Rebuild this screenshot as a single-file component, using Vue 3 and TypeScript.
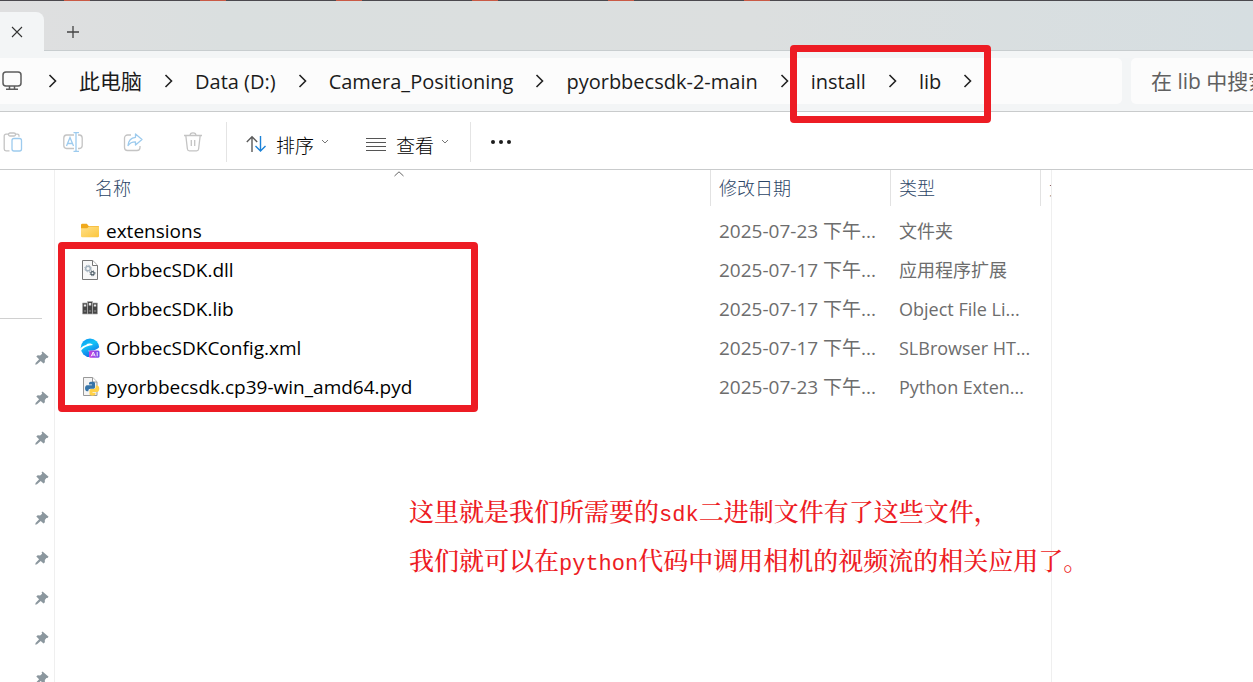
<script setup lang="ts">
interface FileRow {
  icon: string
  name: string
  date: string
  type: string
}

const crumbs: string[] = ['Data (D:)', 'Camera_Positioning', 'pyorbbecsdk-2-main', 'install', 'lib']

const files: FileRow[] = [
  { icon: 'folder', name: 'extensions', date: '2025-07-23 下午...', type: '文件夹' },
  { icon: 'dll', name: 'OrbbecSDK.dll', date: '2025-07-17 下午...', type: '应用程序扩展' },
  { icon: 'lib', name: 'OrbbecSDK.lib', date: '2025-07-17 下午...', type: 'Object File Li...' },
  { icon: 'xml', name: 'OrbbecSDKConfig.xml', date: '2025-07-17 下午...', type: 'SLBrowser HT...' },
  { icon: 'pyd', name: 'pyorbbecsdk.cp39-win_amd64.pyd', date: '2025-07-23 下午...', type: 'Python Exten...' },
]
</script>

<template>
  <div class="window">
    <div class="backdrop"></div>
    <header class="tabs">
      <div class="tab">
        <button class="icon-btn" aria-label="关闭标签页">
          <svg width="12" height="12" viewBox="0 0 12 12"><path d="M1 1l10 10M11 1L1 11" stroke="#333" stroke-width="1.1" fill="none" /></svg>
        </button>
      </div>
      <button class="icon-btn new-tab" aria-label="新建标签页">
        <svg width="14" height="14" viewBox="0 0 14 14"><path d="M7 1v12M1 7h12" stroke="#444" stroke-width="1.3" fill="none" /></svg>
      </button>
    </header>

    <div class="address-row">
      <nav class="address" aria-label="地址">
        <svg class="pc" width="20" height="20" viewBox="0 0 20 20" fill="none" stroke="#5c5c5c" stroke-width="1.5">
          <rect x="1" y="1" width="18" height="14" rx="3" />
          <path d="M7.5 15v3M12.5 15v3M4 18.2h12" />
        </svg>
        <svg class="chev" width="53" height="16" viewBox="0 0 53 16"><path d="M23.500 2l6 6-6 6" /></svg>
        <a class="crumb root" href="#">此电脑</a>
        <svg class="chev" width="53" height="16" viewBox="0 0 53 16"><path d="M23.500 2l6 6-6 6" /></svg>
        <template v-for="c in crumbs" :key="c">
          <a class="crumb" href="#">{{ c }}</a>
          <svg class="chev" width="53" height="16" viewBox="0 0 53 16"><path d="M23.500 2l6 6-6 6" /></svg>
        </template>
      </nav>
      <input class="search" type="text" placeholder="在 lib 中搜索" aria-label="在 lib 中搜索" />
    </div>

    <div class="toolbar">
      <div class="tools">
        <button class="tool" aria-label="粘贴">
          <svg width="20" height="20" viewBox="0 0 20 20" fill="none" stroke="#c4c4c4" stroke-width="1.3">
            <path d="M6 2.2H3a1.8 1.8 0 0 0-1.8 1.8v13A1.8 1.8 0 0 0 3 18.8h3.5M12 2.2h2.4A1.6 1.6 0 0 1 16 3.8v1" />
            <rect x="5.5" y="1" width="7" height="3" rx="1.5" />
            <rect x="9" y="6.5" width="9.5" height="12.5" rx="2" stroke="#9dcbee" />
          </svg>
        </button>
        <button class="tool" aria-label="重命名">
          <svg width="20" height="20" viewBox="0 0 20 20" fill="none" stroke="#c4c4c4" stroke-width="1.3">
            <path d="M11 3H3.5A3 3 0 0 0 .8 6v7.5a3 3 0 0 0 2.700 3H11M15 3h1.500a3 3 0 0 1 2.700 3v7.500a3 3 0 0 1-2.700 3H15" />
            <path d="M3.500 14L7 5.500l3.500 8.500M4.700 11.500h4.600M13 .7v18.600M10.500.7h5.500M10.500 19.300h5.500" stroke="#9dcbee" />
          </svg>
        </button>
        <button class="tool" aria-label="共享">
          <svg width="20" height="20" viewBox="0 0 20 20" fill="none" stroke="#c4c4c4" stroke-width="1.3" stroke-linejoin="round">
            <path d="M8 3H4.500A3 3 0 0 0 1.500 6v9.500a3 3 0 0 0 3 3h9.500a3 3 0 0 0 3-3V14" />
            <path d="M12.500 2L19 7.500l-6.500 5.500V9.800C9 9.700 6.800 11 5 13.500 5.400 9 8 5.800 12.500 5.300z" stroke="#9dcbee" />
          </svg>
        </button>
        <button class="tool" aria-label="删除">
          <svg width="20" height="20" viewBox="0 0 20 20" fill="none" stroke="#c4c4c4" stroke-width="1.3">
            <path d="M1 3.500h18M7 3.500a3 2.700 0 0 1 6 0M2.800 3.500l1.600 13.500a2 2 0 0 0 2 1.800h7.200a2 2 0 0 0 2-1.800L17.200 3.500M8.300 8v6M11.700 8v6" />
          </svg>
        </button>
      </div>
      <div class="menus">
        <button class="menu">
          <svg class="glyph" width="20" height="18" viewBox="0 0 20 18" fill="none" stroke-width="1.400">
            <path d="M6 17V2M.8 7L6 1.800 11.200 7" stroke="#5a5a5a" />
            <path d="M14.500 1v15M9.500 11l5 5 5-5" stroke="#1b82d8" />
          </svg>
          <span>排序</span>
          <svg width="8" height="6" viewBox="0 0 8 6"><path d="M1 1l3 3 3-3" stroke="#777" fill="none" /></svg>
        </button>
        <button class="menu">
          <svg class="glyph" width="20" height="14" viewBox="0 0 20 14"><path d="M0 1.500h20M0 5.500h20M0 9.500h20M0 13.500h20" stroke="#555" stroke-width="1" /></svg>
          <span>查看</span>
          <svg width="8" height="6" viewBox="0 0 8 6"><path d="M1 1l3 3 3-3" stroke="#777" fill="none" /></svg>
        </button>
      </div>
      <button class="more" aria-label="更多">
        <svg width="22" height="6" viewBox="0 0 22 6" fill="#1c1c1c"><circle cx="3" cy="3" r="2" /><circle cx="11" cy="3" r="2" /><circle cx="19" cy="3" r="2" /></svg>
      </button>
    </div>

    <main class="content">
      <aside class="side">
        <hr class="rule" />
        <div v-for="n in 9" :key="n" class="pin">
          <svg width="14" height="14" viewBox="0 0 14 14" fill="#8b979e"><path d="M7.500.4L13.600 5.800 12.400 7l-1-.1-1.600 2 .1 2.300-1.400 1.400L5.700 9.900 2 13.300.3 13.700.6 12 4.100 8.300 1.300 5.500 2.700 4.200l2.400.2L7.200 2.700 6.600 1.400z" /></svg>
        </div>
      </aside>

      <section class="list">
        <svg class="sorted" width="10" height="6" viewBox="0 0 10 6"><path d="M.5 5L5 .8 9.500 5" stroke="#666" fill="none" /></svg>
        <table>
          <colgroup>
            <col class="c-name" /><col class="c-date" /><col class="c-type" /><col class="c-size" />
          </colgroup>
          <thead>
            <tr><th class="name">名称</th><th>修改日期</th><th>类型</th><th>大小</th></tr>
          </thead>
          <tbody>
            <tr v-for="f in files" :key="f.name">
              <td class="name">
                <div class="file">
                  <svg v-if="f.icon === 'folder'" width="20" height="20" viewBox="0 0 20 20">
                    <defs><linearGradient id="fold" x1="0" y1="0" x2="1" y2="1"><stop offset="0" stop-color="#ffe08a" /><stop offset="1" stop-color="#fcc63c" /></linearGradient></defs>
                    <path d="M1 4a1.200 1.200 0 0 1 1.200-1.200h4.600L8.700 5H18a1 1 0 0 1 1 1v4H1z" fill="#f0a91c" />
                    <path d="M1 7.200h6.200L9 5.500h9a1 1 0 0 1 1 1V15a1.200 1.200 0 0 1-1.200 1.200H2.200A1.200 1.200 0 0 1 1 15z" fill="url(#fold)" />
                  </svg>
                  <svg v-else-if="f.icon === 'dll'" width="20" height="20" viewBox="0 0 20 20">
                    <path d="M2.500.5h10.200l4.800 4.800v14.200h-15z" fill="#f8f8f8" stroke="#777" />
                    <path d="M12.500.5v5h5" fill="#fff" stroke="#777" />
                    <circle cx="8" cy="8.500" r="2.300" fill="none" stroke="#a3b1bd" stroke-width="1.400" />
                    <circle cx="8" cy="8.500" r="3.300" fill="none" stroke="#a3b1bd" stroke-dasharray="1.300 1.300" />
                    <circle cx="12.500" cy="13.300" r="1.600" fill="none" stroke="#4e5d68" stroke-width="1.200" />
                    <circle cx="12.500" cy="13.300" r="2.500" fill="none" stroke="#4e5d68" stroke-dasharray="1 1" />
                  </svg>
                  <svg v-else-if="f.icon === 'lib'" width="20" height="20" viewBox="0 0 20 20">
                    <path d="M2.500 4h5v11h-5zM7.500 2.500h5v12.500h-5zM12.500 4h5v11h-5z" fill="#454545" stroke="#aaa" stroke-width=".7" />
                    <path d="M3.800 5.500h2.400v2H3.800zM8.800 4h2.400v2.500H8.800zM13.800 5.500h2.400v2h-2.400z" fill="#e5e5e5" />
                    <path d="M3.800 12h2.400M8.800 12h2.400M13.800 12h2.400" stroke="#999" />
                  </svg>
                  <svg v-else-if="f.icon === 'xml'" width="20" height="20" viewBox="0 0 20 20">
                    <defs>
                      <linearGradient id="wave" x1="0" y1="0" x2=".5" y2="1"><stop offset="0" stop-color="#0a8df5" /><stop offset=".45" stop-color="#14c5f5" /><stop offset="1" stop-color="#126ce8" /></linearGradient>
                      <linearGradient id="badge" x1="0" y1="0" x2="1" y2="0"><stop offset="0" stop-color="#d03fd8" /><stop offset="1" stop-color="#6b4df0" /></linearGradient>
                    </defs>
                    <circle cx="10" cy="9.800" r="9.300" fill="url(#wave)" />
                    <path d="M0 10.800C2 8.300 4 7.300 6 6.900c2-1.700 4.800-1.800 7 .2C9 7.300 4 9 .8 13z" fill="#fff" />
                    <path d="M8.300 12.600c4 .8 8-.2 11.700-4V14H9.500c-.8-.4-1.200-.8-1.200-1.400z" fill="#fff" />
                    <rect x="9" y="12.500" width="10.500" height="7.300" rx="1.500" fill="url(#badge)" />
                    <path d="M11.200 18.300l2-4.300 2 4.300M12 17h2.400M17.200 14v4.300" fill="none" stroke="#fff" stroke-width=".9" />
                  </svg>
                  <svg v-else width="20" height="20" viewBox="0 0 20 20">
                    <path d="M3.500.5h9.200l4.300 4.300v13.700H3.500z" fill="#f4f4f4" stroke="#999" />
                    <path d="M12.500.5v4.500H17" fill="#fff" stroke="#999" />
                    <path d="M9 6.200c0-1.800 6-1.800 6 0v3.800c0 1.500-1 1.700-2 1.700h-2.500c-1.500 0-2.200.8-2.200 2.500H7c-2.600 0-2.600-6 0-6h5V7.500H9z" fill="#3674a8" />
                    <path d="M15.700 8.500H17c3 0 3 6.500 0 6.500h-4.500v.8h3v1.200c0 2.300-6 2.300-6 0v-3c0-1.500 1-2 2-2h2.500c1 0 1.700-.8 1.700-2z" fill="#ffd148" />
                  </svg>
                  <span>{{ f.name }}</span>
                </div>
              </td>
              <td class="date">{{ f.date }}</td>
              <td>{{ f.type }}</td>
              <td></td>
            </tr>
          </tbody>
        </table>
      </section>
      <section class="preview"></section>
    </main>

    <div class="mark mark-path"></div>
    <div class="mark mark-files"></div>
    <div class="note">
      <p>这里就是我们所需要的<span class="latin">sdk</span>二进制文件有了这些文件，</p>
      <p>我们就可以在<span class="latin">python</span>代码中调用相机的视频流的相关应用了。</p>
    </div>
  </div>
</template>

<style>
body {
  margin: 0;
}
</style>

<style scoped>
.window {
  position: relative;
  display: flex;
  flex-direction: column;
  height: 100vh;
  overflow: hidden;
  background: #fff;
  color: #1b1b1b;
  font-family: "Open Sans", "Noto Sans CJK SC", sans-serif;
  font-size: 18px;
}
button {
  border: 0;
  padding: 0;
  background: none;
  color: inherit;
  font: inherit;
}
svg {
  display: block;
  flex: none;
}
.backdrop {
  height: 1px;
  flex: none;
  background: linear-gradient(90deg, transparent 775px, #4b494e 775px), repeating-linear-gradient(90deg, #4b494e 0 64px, #c95a45 64px 90px, #4b494e 90px 136px);
}
.tabs {
  display: flex;
  flex: none;
  height: 49px;
  border-bottom: 1px solid #c8cdcf;
  background: linear-gradient(90deg, #dfdfe0, #dadfdf 18%, #dcdfdf 60%, #d6dee1);
}
.tab {
  display: flex;
  align-items: center;
  width: 44px;
  height: 39px;
  margin-top: 11px;
  border-radius: 0 8px 0 0;
  background: #f3f5f6;
}
.icon-btn {
  display: flex;
  align-items: center;
  justify-content: center;
  width: 34px;
  height: 38px;
}
.new-tab {
  width: 58px;
  margin-top: 12px;
}
.address-row {
  display: flex;
  flex: none;
  gap: 9px;
  padding: 7px 0;
  border-bottom: 1px solid #c9cbcc;
  background: #f3f5f6;
}
.address {
  display: flex;
  flex: 1;
  align-items: center;
  min-width: 0;
  height: 46px;
  padding-left: 2px;
  border-radius: 0 5px 5px 0;
  background: #fcfcfc;
  font-size: 20px;
}
.pc {
  margin-right: 4px;
}
.chev path {
  fill: none;
  stroke: #222;
  stroke-width: 1.6;
}
.crumb {
  padding-top: 2px;
  color: inherit;
  line-height: 28px;
  text-decoration: none;
  white-space: nowrap;
}
.root {
  padding-top: 0;
  font-size: 21px;
}
.search {
  box-sizing: border-box;
  flex: none;
  width: 122px;
  height: 46px;
  padding: 0 0 0 20px;
  border: 0;
  border-radius: 5px 0 0 5px;
  background: #fcfcfc;
  font: inherit;
  font-size: 21px;
}
.search::placeholder {
  color: #606060;
  opacity: 1;
}
.toolbar {
  box-sizing: border-box;
  display: flex;
  flex: none;
  align-items: center;
  height: 58px;
  padding-top: 3px;
  border-bottom: 1px solid #c9cbcc;
}
.tools {
  display: flex;
  gap: 40px;
  padding: 0 23px 0 3px;
}
.menus {
  display: flex;
  gap: 37px;
  padding: 0 21px 0 19px;
  border-left: 1px solid #e4e4e4;
  border-right: 1px solid #e4e4e4;
}
.menu {
  display: flex;
  align-items: center;
  height: 40px;
  color: #000;
  font-size: 19px;
  font-weight: 300;
}
.menu span {
  margin: 6px 7px 0 10px;
}
.glyph {
  margin-top: 4px;
}
.more {
  padding: 0 19px;
}
.content {
  display: flex;
  flex: 1;
  min-height: 0;
}
.side {
  flex: none;
  width: 54px;
  border-right: 1px solid #efefef;
  overflow: hidden;
}
.rule {
  width: 42px;
  height: 1px;
  margin: 148px 0 19px;
  border: 0;
  background: #d0d0d0;
}
.pin {
  display: flex;
  align-items: center;
  justify-content: flex-end;
  height: 40px;
  padding-right: 5px;
}
.list {
  position: relative;
  flex: 1;
  min-width: 0;
  overflow: hidden;
  border-right: 1px solid #efefef;
}
.preview {
  flex: none;
  width: 201px;
}
.sorted {
  position: absolute;
  top: 1px;
  left: 339px;
}
table {
  width: 100%;
  table-layout: fixed;
  border-collapse: separate;
  border-spacing: 0;
}
.c-date {
  width: 180px;
}
.c-type {
  width: 150px;
}
.c-size {
  width: 11px;
}
th,
td {
  box-sizing: border-box;
  overflow: hidden;
  padding: 0 0 0 8px;
  line-height: 24px;
  text-align: left;
  white-space: nowrap;
}
th {
  height: 36px;
  border-left: 1px solid #e2e2e2;
  color: #2c4566;
  font-weight: 300;
}
td {
  height: 39px;
  padding-left: 9px;
  color: #6d6d6d;
}
td.date {
  font-size: 19px;
}
th.name {
  padding-left: 40px;
  border-left: 0;
}
td.name {
  padding-left: 25px;
  color: #000;
  font-size: 19px;
}
tbody::before {
  content: "";
  display: block;
  height: 5px;
}
.file {
  display: flex;
  align-items: center;
  gap: 6px;
}
.mark {
  position: absolute;
  box-sizing: border-box;
  border: 7px solid #ed1c24;
  border-radius: 4px;
  pointer-events: none;
}
.mark-path {
  top: 45px;
  left: 790px;
  width: 201px;
  height: 78px;
}
.mark-files {
  top: 242px;
  left: 58px;
  width: 420px;
  height: 170px;
}
.note {
  position: absolute;
  top: 486px;
  left: 409px;
  color: #ed1c24;
  font-family: "Noto Serif CJK SC", "Noto Sans CJK SC", serif;
  font-size: 25px;
  font-weight: 500;
  line-height: 49px;
  white-space: nowrap;
}
.note p {
  height: 49px;
  margin: 0;
}
.latin {
  font-family: "Liberation Mono", monospace;
  font-size: 22px;
  font-weight: 400;
  line-height: 1;
}
</style>
